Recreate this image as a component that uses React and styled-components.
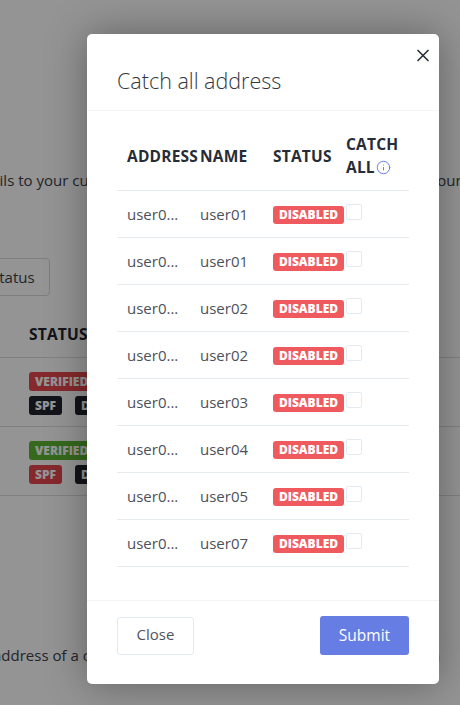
import React from 'react';
import styled, { createGlobalStyle } from 'styled-components';
import { Info, X } from 'lucide-react';

const GlobalStyle = createGlobalStyle`
  html, body {
    margin: 0;
    padding: 0;
    height: 100%;
    overflow: hidden;
    background: #fff;
    font-family: 'Open Sans', 'Noto Sans', sans-serif;
  }
`;

const Page = styled.div`
  position: relative;
  width: 460px;
  height: 705px;
  overflow: hidden;
  color: #3c4049;
`;

const Paragraph = styled.p`
  margin: ${(p) => p.$top}px 0 0 ${(p) => p.$left}px;
  font-size: 15px;
  line-height: 22px;
  white-space: nowrap;
`;

const StatusButton = styled.div`
  box-sizing: border-box;
  width: 100px;
  height: 38px;
  margin: 67px 0 0 -50px;
  border: 1px solid #d6dbe0;
  border-radius: 4px;
  padding-left: 40px;
  font-size: 15px;
  line-height: 36px;
`;

const StatusHead = styled.div`
  box-sizing: border-box;
  height: 62px;
  padding: 27px 0 0 29px;
  border-bottom: 1px solid #d9dde1;
  font-size: 15.5px;
  line-height: 22px;
  font-weight: 700;
  letter-spacing: 0.2px;
  color: #20232b;
`;

const StatusRow = styled.div`
  box-sizing: border-box;
  height: 69px;
  padding: 14px 0 0 29px;
  border-bottom: 1px solid #d9dde1;
  display: flex;
  flex-direction: column;
  align-items: flex-start;
  gap: 5px;
`;

const TagLine = styled.div`
  display: flex;
  gap: 13px;
`;

const Tag = styled.span`
  height: 19px;
  padding: 0 6px;
  border-radius: 3px;
  background: ${(p) => p.$bg};
  color: #fff;
  font-size: 12px;
  line-height: 19px;
  font-weight: 800;
`;

const Overlay = styled.div`
  position: absolute;
  inset: 0;
  background: rgba(0, 0, 0, 0.42);
`;

const Modal = styled.div`
  position: absolute;
  top: 34px;
  left: 87px;
  box-sizing: border-box;
  width: 352px;
  height: 650px;
  background: #fff;
  border-radius: 5px;
  box-shadow: 0 0 40px rgba(0, 0, 0, 0.35);
  display: flex;
  flex-direction: column;
`;

const CloseIcon = styled.button`
  position: absolute;
  top: 11px;
  right: 6px;
  width: 20px;
  height: 20px;
  padding: 0;
  border: none;
  background: none;
  color: #2a2e38;
  display: flex;
  align-items: center;
  justify-content: center;
`;

const Title = styled.h2`
  box-sizing: border-box;
  height: 77px;
  margin: 0;
  padding: 32px 30px 0;
  font-size: 21.5px;
  line-height: 30px;
  font-weight: 300;
  color: #33373f;
  border-bottom: 1px solid #f4f6f8;
`;

const Body = styled.div`
  flex: 1;
  padding: 0 30px;
`;

const Table = styled.table`
  width: 292px;
  table-layout: fixed;
  border-collapse: collapse;
`;

const Th = styled.th`
  box-sizing: border-box;
  width: 73px;
  height: 79px;
  padding: 12px 0 0 10px;
  border-bottom: 1px solid #e6ebf0;
  text-align: left;
  font-size: 15.5px;
  line-height: 23px;
  font-weight: 700;
  letter-spacing: 0.2px;
  color: #282c36;
`;

const Td = styled.td`
  box-sizing: border-box;
  height: 47px;
  padding: 0 0 0 10px;
  border-bottom: 1px solid #e6ebf0;
  font-size: 15px;
  color: #4d515a;
  white-space: nowrap;
  overflow: ${(p) => (p.$clip ? 'hidden' : 'visible')};
  text-overflow: ellipsis;
`;

const Badge = styled.span`
  display: block;
  width: 71px;
  height: 18px;
  margin-top: 2px;
  border-radius: 3px;
  background: #ef5a5f;
  color: #fff;
  font-size: 12px;
  line-height: 18px;
  font-weight: 800;
  text-align: center;
`;

const Checkbox = styled.span`
  display: block;
  box-sizing: border-box;
  width: 16px;
  height: 16px;
  margin-top: -4px;
  border: 1px solid #e4ebf0;
  border-radius: 2px;
`;

const InfoIcon = styled(Info)`
  vertical-align: -2px;
  margin-left: 1px;
  color: #5f78f0;
`;

const Footer = styled.div`
  box-sizing: border-box;
  height: 84px;
  padding: 15px 30px 0;
  border-top: 1px solid #f1f4f6;
  display: flex;
  justify-content: space-between;
  align-items: flex-start;
`;

const CloseButton = styled.button`
  box-sizing: border-box;
  width: 77px;
  height: 38px;
  margin-top: 1px;
  padding: 0 0 5px;
  border: 1px solid #e3ebf0;
  border-radius: 3px;
  background: #fff;
  color: #50545c;
  font: 400 15px 'Open Sans', sans-serif;
`;

const SubmitButton = styled.button`
  box-sizing: border-box;
  width: 89px;
  height: 39px;
  padding: 0 0 2px;
  border: none;
  border-radius: 3px;
  background: #667de4;
  color: #fff;
  font: 400 15.5px 'Open Sans', sans-serif;
`;

const rows = ['user01', 'user01', 'user02', 'user02', 'user03', 'user04', 'user05', 'user07'];

export default function App() {
  return (
    <>
      <GlobalStyle />
      <Page>
        <Paragraph $top={169} $left={-70}>
          Send emails to your customers from addresses on your own domain to your
        </Paragraph>
        <StatusButton>Status</StatusButton>
        <StatusHead>STATUS</StatusHead>
        <StatusRow>
          <Tag $bg="#e5484d">VERIFIED</Tag>
          <TagLine>
            <Tag $bg="#20232b">SPF</Tag>
            <Tag $bg="#20232b">DKIM</Tag>
          </TagLine>
        </StatusRow>
        <StatusRow>
          <Tag $bg="#5cb531">VERIFIED</Tag>
          <TagLine>
            <Tag $bg="#e5484d">SPF</Tag>
            <Tag $bg="#20232b">DKIM</Tag>
          </TagLine>
        </StatusRow>
        <Paragraph $top={148} $left={-7}>
          address of a catch all mailbox receives any message you click on
        </Paragraph>
        <Overlay />
        <Modal>
          <CloseIcon aria-label="Close">
            <X size={21} strokeWidth={2} />
          </CloseIcon>
          <Title>Catch all address</Title>
          <Body>
            <Table>
              <thead>
                <tr>
                  <Th>ADDRESS</Th>
                  <Th>NAME</Th>
                  <Th>STATUS</Th>
                  <Th>
                    CATCH ALL<InfoIcon size={15} strokeWidth={1.5} />
                  </Th>
                </tr>
              </thead>
              <tbody>
                {rows.map((name, i) => (
                  <tr key={i}>
                    <Td $clip>user0...</Td>
                    <Td $clip>{name}</Td>
                    <Td>
                      <Badge>DISABLED</Badge>
                    </Td>
                    <Td>
                      <Checkbox />
                    </Td>
                  </tr>
                ))}
              </tbody>
            </Table>
          </Body>
          <Footer>
            <CloseButton>Close</CloseButton>
            <SubmitButton>Submit</SubmitButton>
          </Footer>
        </Modal>
      </Page>
    </>
  );
}
